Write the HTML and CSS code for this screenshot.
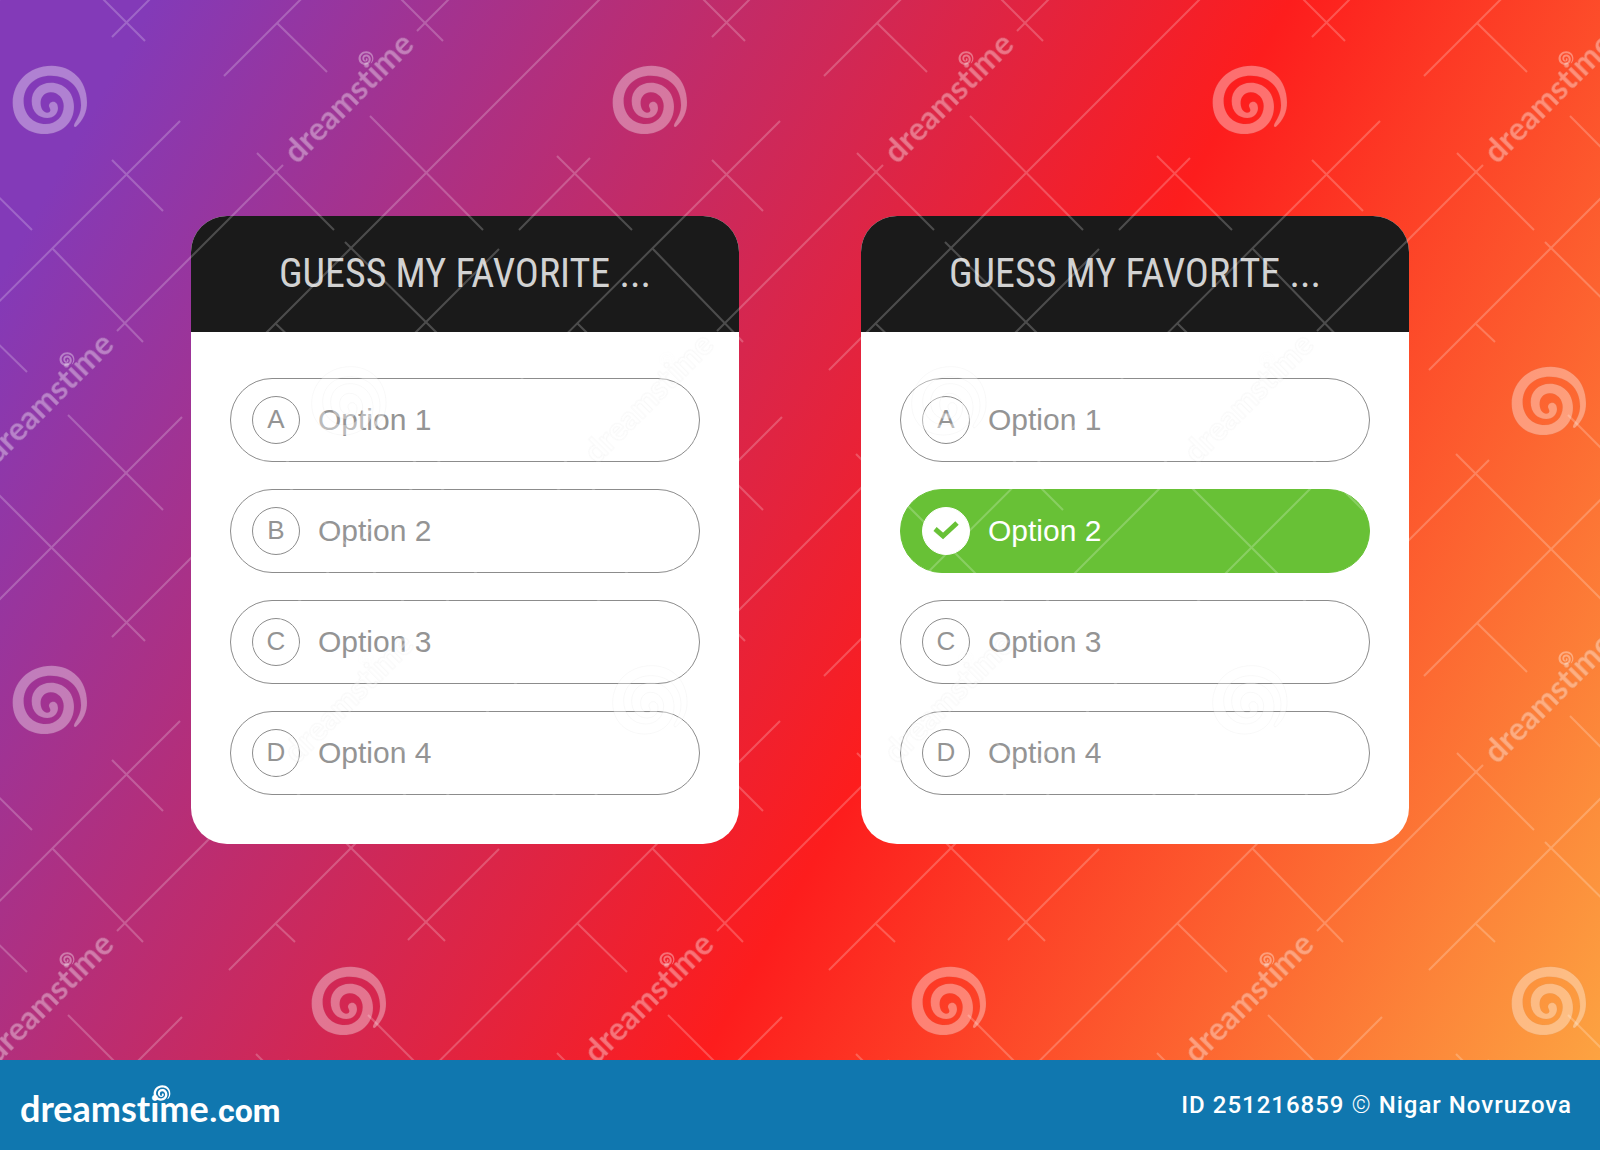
FILE: index.html
```html
<!DOCTYPE html>
<html lang="en">
    <head>
        <meta charset="utf-8">
        <meta name="viewport" content="width=device-width, initial-scale=1.0">
        <title>Guess my favorite</title>
        <link rel="stylesheet" href="styles.css">
    </head>
    <body>
        <main class="stage">
            <section class="card">
                <h2 class="card-title">GUESS MY FAVORITE ...</h2>
                <div class="options">
                    <button class="option" type="button"><span class="letter">A</span>Option 1</button>
                    <button class="option" type="button"><span class="letter">B</span>Option 2</button>
                    <button class="option" type="button"><span class="letter">C</span>Option 3</button>
                    <button class="option" type="button"><span class="letter">D</span>Option 4</button>
                </div>
            </section>
            <section class="card">
                <h2 class="card-title">GUESS MY FAVORITE ...</h2>
                <div class="options">
                    <button class="option" type="button"><span class="letter">A</span>Option 1</button>
                    <button class="option selected" type="button">
                        <span class="letter">
                            <svg width="26" height="20" viewBox="0 0 26 20" aria-hidden="true"><path d="M2 9 L10 16 L24 3" fill="none" stroke="#68c136" stroke-width="5"/></svg>
                        </span>Option 2</button>
                    <button class="option" type="button"><span class="letter">C</span>Option 3</button>
                    <button class="option" type="button"><span class="letter">D</span>Option 4</button>
                </div>
            </section>

            <!-- watermark -->
            <svg class="watermark" aria-hidden="true">
                <defs>
                    <symbol id="spiral" viewBox="0 0 300 300">
                        <path d="M228 230 C250 210 262 185 261 155 C260 90 215 47 155 47 C85 47 38 98 38 158 C38 215 80 252 133 252 C185 252 222 218 222 170 C222 125 190 98 153 98 C118 98 95 122 95 153 C95 185 115 204 142 204 C162 204 174 190 174 174 C174 162 168 155 160 155 C151 155 146 162 147 169 C148 174 151 176 151 181 C150 187 146 188 141 188 C128 186 121 172 122 155 C124 138 136 127 152 127 C175 127 191 146 191 168 C191 200 168 222 137 222 C98 222 71 192 71 153 C71 108 106 77 152 77 C206 77 243 112 243 165 C243 188 233 205 223 222 C220 228 223 233 228 230Z"/>
                    </symbol>
                    <g id="lines">
                        <path d="M782 417 L229 970 M780 121 L224 676 M289 460 L112 637 M283 165 L117 331 M583 465 L417 631 M590 158 L519 230 M499 249 L408 340"/>
                        <path d="M68 415 L163 510 M256 454 L443 641 M-43 453 L145 641 M368 415 L463 510 M370 116 L483 230 M257 153 L334 230 M112 160 L163 211 M-43 156 L32 230 M52 248 L143 342 M345 242 L445 341 M-23 323 L27 372 M275 323 L295 342 M277 623 L327 672"/>
                    </g>
                    <pattern id="tile" width="600" height="600" patternUnits="userSpaceOnUse">
                        <g class="mark-lines">
                            <use href="#lines"/>
                            <use href="#lines" x="600"/>
                            <use href="#lines" x="-600"/>
                            <use href="#lines" y="-600"/>
                            <use href="#lines" x="-600" y="-600"/>
                            <use href="#lines" x="600" y="-600"/>
                        </g>
                        <g class="mark-spirals">
                            <use href="#spiral" y="50" width="100" height="100"/>
                            <use href="#spiral" x="299" y="351" width="100" height="100"/>
                            <use href="#spiral" x="356" y="48" width="20" height="20"/>
                            <use href="#spiral" x="57" y="349" width="20" height="20"/>
                        </g>
                    </pattern>
                </defs>
                <rect width="100%" height="100%" fill="url(#tile)"/>
                <g class="mark-text">
                    <text transform="translate(297 165) rotate(-45)">dreamstime</text>
                    <text transform="translate(897 165) rotate(-45)">dreamstime</text>
                    <text transform="translate(1497 165) rotate(-45)">dreamstime</text>
                    <text transform="translate(-3 465) rotate(-45)">dreamstime</text>
                    <text transform="translate(597 465) rotate(-45)">dreamstime</text>
                    <text transform="translate(1197 465) rotate(-45)">dreamstime</text>
                    <text transform="translate(297 765) rotate(-45)">dreamstime</text>
                    <text transform="translate(897 765) rotate(-45)">dreamstime</text>
                    <text transform="translate(1497 765) rotate(-45)">dreamstime</text>
                    <text transform="translate(-3 1065) rotate(-45)">dreamstime</text>
                    <text transform="translate(597 1065) rotate(-45)">dreamstime</text>
                    <text transform="translate(1197 1065) rotate(-45)">dreamstime</text>
                </g>
            </svg>
        </main>

        <footer class="footer">
            <a class="logo" href="#">dreamstime<span class="logo-com">.com</span>
                <svg class="logo-spiral" viewBox="30 40 240 220" aria-hidden="true"><use href="#spiral" width="300" height="300"/></svg>
            </a>
            <p class="credit">ID 251216859 <span class="copy">©</span> Nigar Novruzova</p>
        </footer>
    </body>
</html>
```

FILE: styles.css
```css
*{
    padding: 0;
    margin: 0;
    box-sizing: border-box;
}
body {
    display: flex;
    flex-direction: column;
    min-height: 100vh;
    font-family: "Liberation Sans", Arial, sans-serif;
}
.stage{
    position: relative;
    flex: 1;
    display: flex;
    justify-content: center;
    align-items: center;
    gap: 122px;
    overflow: hidden;
    background: linear-gradient(119deg, #833ab8 7%, #fd1d1d 59%, #fcb045 104%);
}

/* cards */
.card{
    width: 548px;
    border-radius: 36px;
    overflow: hidden;
    background-color: white;
}
.card-title{
    height: 116px;
    line-height: 116px;
    text-align: center;
    white-space: nowrap;
    background-color: #1a1a1a;
    color: #d2d2d2;
    font-family: "Roboto Condensed", "Arial Narrow", "Liberation Sans", sans-serif;
    font-size: 40px;
    font-weight: normal;
}
.options{
    display: flex;
    flex-direction: column;
    gap: 27px;
    padding: 46px 39px 49px;
}
.option{
    display: flex;
    align-items: center;
    gap: 18px;
    height: 84px;
    padding: 0 21px;
    border: 1px solid #8c8c8c;
    border-radius: 42px;
    background-color: white;
    color: #949494;
    font-family: inherit;
    font-size: 30px;
}
.letter{
    display: flex;
    align-items: center;
    justify-content: center;
    width: 48px;
    height: 48px;
    padding-bottom: 2px;
    border: 1px solid #8c8c8c;
    border-radius: 50%;
    font-size: 26px;
}
.selected{
    background-color: #68c136;
    border-color: #68c136;
    color: white;
}
.selected .letter{
    background-color: white;
    border-color: white;
}

/* watermark */
.watermark{
    position: absolute;
    top: 0;
    left: 0;
    width: 100%;
    height: 100%;
    pointer-events: none;
}
.mark-lines{
    fill: none;
    stroke: white;
    stroke-width: 2;
    opacity: 0.22;
}
.mark-spirals{
    fill: white;
    stroke: #777;
    stroke-opacity: 0.2;
    stroke-width: 2;
    opacity: 0.36;
}
.mark-text{
    fill: white;
    stroke: #777;
    stroke-opacity: 0.15;
    stroke-width: 1;
    opacity: 0.38;
    font-family: Lato, sans-serif;
    font-size: 32px;
    font-weight: bold;
    font-variant-ligatures: none;
}

/* footer */
.footer{
    display: flex;
    justify-content: space-between;
    align-items: center;
    height: 90px;
    padding: 0 28px 0 20px;
    background-color: #1077af;
    color: white;
}
.logo{
    position: relative;
    padding-top: 6px;
    color: white;
    text-decoration: none;
    font-family: Lato, sans-serif;
    font-weight: bold;
    font-size: 36px;
    font-variant-ligatures: none;
}
.logo-com{
    font-family: Roboto, sans-serif;
    font-size: 32px;
}
.logo-spiral{
    position: absolute;
    left: 133px;
    top: 4px;
    width: 18px;
    height: 18px;
    fill: white;
}
.credit{
    font-family: Roboto, sans-serif;
    font-weight: 500;
    font-size: 24px;
    letter-spacing: 1px;
}
.copy{
    font-weight: 300;
}
```
